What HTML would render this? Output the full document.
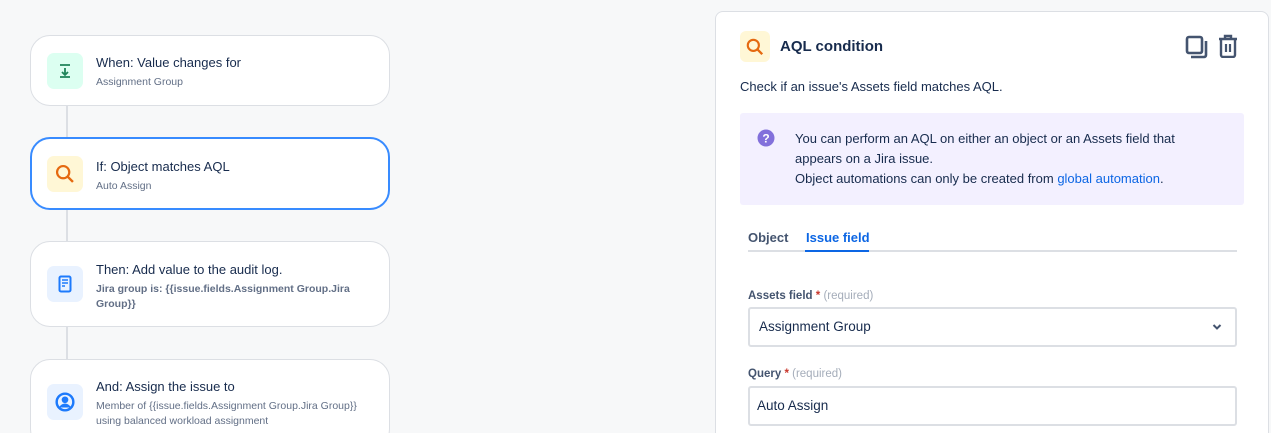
<!DOCTYPE html>
<html><head><style>
*{box-sizing:border-box;margin:0;padding:0}
html{width:1271px;height:433px;overflow:hidden}
body{width:1271px;height:433px;overflow:hidden;background:#f7f8f9;font-family:"Liberation Sans",sans-serif;color:#172b4d;position:relative}
.line{position:absolute;left:66px;width:2px;background:#dcdfe4}
.card{position:absolute;left:30px;width:360px;background:#fff;border:1px solid #dcdfe4;border-radius:20px}
.card.sel{border:2px solid #388bff}
.ic{position:absolute;left:16px;width:36px;height:36px;border-radius:7px;display:flex;align-items:center;justify-content:center}
.sel .ic{left:15px}
.t{position:absolute;left:65px;font-size:13px;color:#172b4d}
.sel .t,.sel .s{left:64px}
.s{position:absolute;left:65px;font-size:10.5px;color:#626f86;line-height:15px}
.panel{position:absolute;left:715px;top:11px;width:554px;height:440px;background:#fff;border:1px solid #dcdfe4;border-radius:8px}
.abs{position:absolute}
</style></head><body>
<div class="line" style="top:105px;height:34px"></div>
<div class="line" style="top:209px;height:33px"></div>
<div class="line" style="top:326px;height:34px"></div>

<div class="card" style="top:35px;height:71px">
 <div class="ic" style="top:17px;background:#dcfff1"><svg width="16" height="16" viewBox="0 0 16 16"><path d="M3 2h10M8 5v7M5 9l3 3 3-3M3 14h10" stroke="#1f845a" stroke-width="1.8" fill="none"/></svg></div>
 <div class="t" style="top:19px">When: Value changes for</div>
 <div class="s" style="top:39px">Assignment Group</div>
</div>
<div class="card sel" style="top:137px;height:73px">
 <div class="ic" style="top:17px;background:#fff7d6"><svg width="22" height="22" viewBox="0 0 18 18"><circle cx="7.5" cy="7.5" r="5" stroke="#e56910" stroke-width="1.8" fill="none"/><path d="M11 11l4.5 4.5" stroke="#e56910" stroke-width="2"/></svg></div>
 <div class="t" style="top:20px">If: Object matches AQL</div>
 <div class="s" style="top:40px">Auto Assign</div>
</div>
<div class="card" style="top:241px;height:86px">
 <div class="ic" style="top:24px;background:#e9f2ff"><svg width="14" height="20" viewBox="0 0 14 18"><rect x="1.5" y="1.5" width="11" height="15" rx="1.5" stroke="#1d7afc" stroke-width="2" fill="none"/><path d="M4 5h6M4 8h6M4 11h3" stroke="#1d7afc" stroke-width="1.6"/></svg></div>
 <div class="t" style="top:20px">Then: Add value to the audit log.</div>
 <div class="s" style="top:40px;font-weight:bold;width:280px">Jira group is: {{issue.fields.Assignment Group.Jira Group}}</div>
</div>
<div class="card" style="top:359px;height:90px">
 <div class="ic" style="top:24px;background:#e9f2ff"><svg width="20" height="20" viewBox="0 0 18 18"><circle cx="9" cy="9" r="7.5" stroke="#1d7afc" stroke-width="2.2" fill="none"/><circle cx="9" cy="7" r="3" fill="#1d7afc"/><path d="M3.5 14c1.5-2.5 3.5-3.5 5.5-3.5s4 1 5.5 3.5" fill="#1d7afc"/></svg></div>
 <div class="t" style="top:19px">And: Assign the issue to</div>
 <div class="s" style="top:39px">Member of {{issue.fields.Assignment Group.Jira Group}}<br>using balanced workload assignment</div>
</div>

<div class="panel">
 <div class="abs" style="left:24px;top:19px;width:30px;height:31px;background:#fff7d6;border-radius:6px;display:flex;align-items:center;justify-content:center"><svg width="20" height="20" viewBox="0 0 18 18"><circle cx="7.5" cy="7.5" r="5" stroke="#e56910" stroke-width="1.9" fill="none"/><path d="M11 11l4.5 4.5" stroke="#e56910" stroke-width="2.1"/></svg></div>
 <div class="abs" style="left:64px;top:26px;font-size:15px;font-weight:bold">AQL condition</div>
 <svg class="abs" style="left:469px;top:23px" width="24" height="24" viewBox="0 0 24 24"><rect x="2" y="2" width="15" height="16" rx="2" stroke="#44546f" stroke-width="2.6" fill="none"/><path d="M21 6v14a2 2 0 0 1-2 2H6" stroke="#44546f" stroke-width="2.6" fill="none"/></svg>
 <svg class="abs" style="left:501px;top:22px" width="22" height="24" viewBox="0 0 22 24"><path d="M2 5h18M8 5V2h6v3" stroke="#44546f" stroke-width="2.4" fill="none"/><path d="M4 6v15a2 2 0 0 0 2 2h10a2 2 0 0 0 2-2V6" stroke="#44546f" stroke-width="2.4" fill="none"/><path d="M9 10v8M13 10v8" stroke="#44546f" stroke-width="2.2"/></svg>
 <div class="abs" style="left:24px;top:67px;font-size:13px">Check if an issue's Assets field matches AQL.</div>
 <div class="abs" style="left:24px;top:101px;width:504px;height:92px;background:#f3f0ff;border-radius:3px">
  <svg class="abs" style="left:17px;top:16px" width="18" height="18" viewBox="0 0 18 18"><circle cx="9" cy="9" r="8.5" fill="#8270db"/><text x="9" y="13.5" font-size="12" font-weight="bold" fill="#fff" text-anchor="middle" font-family="Liberation Sans">?</text></svg>
  <div class="abs" style="left:55px;top:16px;font-size:13px;line-height:20px">You can perform an AQL on either an object or an Assets field that<br>appears on a Jira issue.<br>Object automations can only be created from <span style="color:#0c66e4">global automation</span>.</div>
 </div>
 <div class="abs" style="left:32px;top:218px;font-size:13px;font-weight:bold;color:#44546f">Object</div>
 <div class="abs" style="left:90px;top:218px;font-size:13px;font-weight:bold;color:#0c66e4">Issue field</div>
 <div class="abs" style="left:32px;top:238px;width:489px;height:2px;background:#dcdfe4"></div>
 <div class="abs" style="left:89px;top:238px;width:64px;height:2px;background:#0c66e4"></div>
 <div class="abs" style="left:32px;top:278px;font-size:11.5px;font-weight:bold;color:#44546f">Assets field <span style="color:#c9372c">*</span> <span style="color:#a5adba;font-weight:normal">(required)</span></div>
 <div class="abs" style="left:32px;top:295px;width:489px;height:40px;border:2px solid #dcdfe4;border-radius:3px;font-size:13.5px;padding:10px 9px">Assignment Group
  <svg class="abs" style="left:462px;top:14px" width="10" height="8" viewBox="0 0 10 8"><path d="M1.5 2l3.5 3.5L8.5 2" stroke="#44546f" stroke-width="2" fill="none"/></svg></div>
 <div class="abs" style="left:32px;top:356px;font-size:11.5px;font-weight:bold;color:#44546f">Query <span style="color:#c9372c">*</span> <span style="color:#a5adba;font-weight:normal">(required)</span></div>
 <div class="abs" style="left:32px;top:374px;width:489px;height:40px;border:2px solid #dcdfe4;border-radius:3px;font-size:13.5px;padding:10px 7px">Auto Assign</div>
</div>
</body></html>
